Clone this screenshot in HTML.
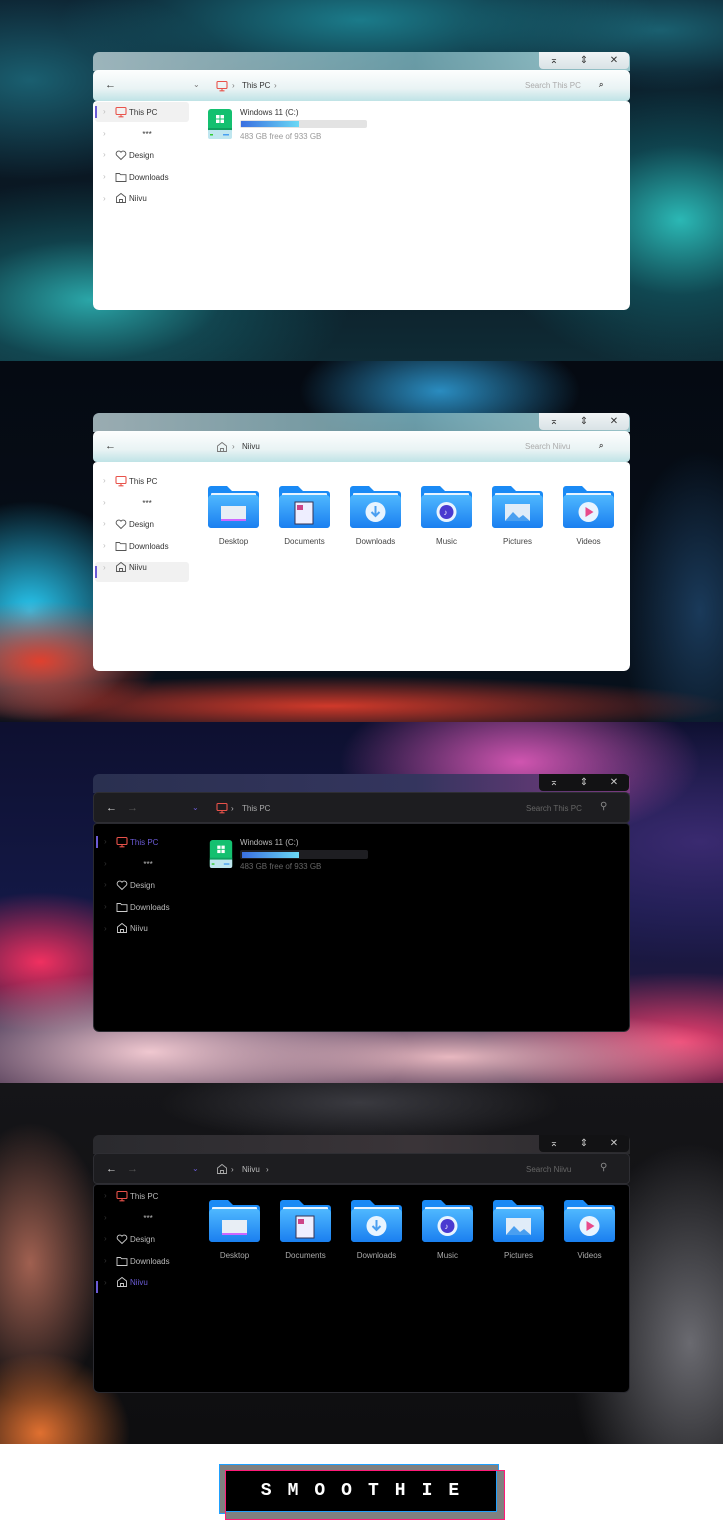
<!DOCTYPE html>
<html><head><meta charset="utf-8">
<style>
*{margin:0;padding:0;box-sizing:border-box}
body{width:723px;height:1536px;background:#fff;font-family:"Segoe UI","Liberation Sans",sans-serif;position:relative;overflow:hidden}
.panel{position:absolute;left:0;width:723px;height:361px;overflow:hidden}
.p1{top:0;background:radial-gradient(ellipse 260px 120px at 90px 300px,#2aa6a8 0%,rgba(20,90,100,.6) 50%,transparent 100%),radial-gradient(ellipse 200px 150px at 680px 220px,#2bb8b5 0%,rgba(20,110,120,.5) 50%,transparent 100%),radial-gradient(ellipse 300px 80px at 360px 20px,#1b7b8a 0%,transparent 100%),radial-gradient(ellipse 200px 100px at 30px 80px,#1a5f70,transparent),radial-gradient(ellipse 200px 60px at 660px 30px,#1a6070,transparent),linear-gradient(180deg,#0b1a28,#0a1722 60%,#0f2b35)}
.p2{top:361px;background:radial-gradient(ellipse 160px 150px at 20px 640px,#2bd5ff,transparent),radial-gradient(ellipse 120px 60px at 40px 300px,#e0402e,transparent),radial-gradient(ellipse 400px 30px at 330px 345px,#d0392a,transparent),radial-gradient(ellipse 120px 110px at 30px 250px,#28c7f0,transparent),radial-gradient(ellipse 140px 60px at 440px 30px,#2a8cc0,transparent),radial-gradient(ellipse 80px 160px at 700px 250px,#1a3a5a,transparent),linear-gradient(180deg,#050a12,#07111c)}
.p3{top:722px;background:radial-gradient(ellipse 180px 80px at 520px 40px,#d055b0,transparent),radial-gradient(ellipse 300px 120px at 700px 120px,#3a2a70,transparent),radial-gradient(ellipse 260px 80px at 150px 330px,#f0c8d0,transparent),radial-gradient(ellipse 300px 50px at 450px 335px,#e8b8c0,transparent),radial-gradient(ellipse 120px 70px at 40px 240px,#f03060,transparent),radial-gradient(ellipse 200px 70px at 680px 320px,#f04070,transparent),linear-gradient(180deg,#0e1030,#131845 50%,#2a1838)}
.p4{top:1083px;background:radial-gradient(ellipse 90px 80px at 40px 350px,#e07030,transparent),radial-gradient(ellipse 80px 140px at 30px 180px,#a06050,transparent),radial-gradient(ellipse 120px 200px at 690px 260px,#6a6a70,transparent),radial-gradient(ellipse 200px 40px at 360px 20px,#3a3a40,transparent),linear-gradient(180deg,#151518,#0e0e10)}
.win{position:absolute;left:93px;top:52px;width:537px;height:258px;border-radius:6px;overflow:hidden}
.title{position:absolute;left:0;top:0;width:537px;height:19px}
.ctrl{position:absolute;right:1px;top:0;width:90px;height:17px;border-radius:0 0 4px 4px;font-size:10px;display:flex;justify-content:space-around;align-items:center}
.addr{position:absolute;left:0;top:18px;width:537px;height:31px;border-radius:5px 5px 4px 4px}
.body{position:absolute;left:0;top:49px;width:537px;height:209px;border-radius:4px 4px 6px 6px}
.sw{position:absolute;left:0;top:0;width:100px;height:120px}
.t{position:absolute;font-size:8px;white-space:nowrap;line-height:10px}
.sw .t{left:36px}
.chev{position:absolute;left:10px;font-size:8px}
.sel{position:absolute;left:2px;width:94px;height:20px;border-radius:3px}
.selbar{position:absolute;left:2px;width:1.5px;height:12px;background:#6b5bd6}
.fold{position:absolute;top:71px;width:51px}
.fold .lbl{position:absolute;top:51px;left:-10px;width:71px;text-align:center;font-size:8px}
.light .title{background:linear-gradient(90deg,rgba(180,200,205,.85),rgba(120,170,180,.85) 60%,rgba(170,215,220,.9))}
.light .ctrl{background:linear-gradient(#f0f4f5,#d9e3e6);color:#333}
.light .addr{background:linear-gradient(180deg,#fdfefe,#e9f3f4 60%,#bfe3e6)}
.light .body{background:#fff}
.light .t{color:#333}
.light .chev{color:#bbb}
.light .sel{background:#f1f1f1}
.dark .title{background:linear-gradient(90deg,#2a3050,#34355e 60%,#7a3a80)}
.dark .ctrl{background:#121214;color:#ccc}
.dark .addr{background:#1d1d20;border:1px solid #2e2e33}
.dark .body{background:#000;border:1px solid #2a2a30}
.dark .t{color:#bbb}
.dark .chev{color:#333}
.p4 .title{background:linear-gradient(90deg,#2a2a2e,#3a3438 60%,#2a2a2d)}
.dark .fold .lbl{color:#aaa}
.light .fold .lbl{color:#444}
</style></head><body>

<svg width="0" height="0" style="position:absolute">
<defs>
<linearGradient id="fg" x1="0" y1="0" x2="0" y2="1"><stop offset="0" stop-color="#4fb8ff"/><stop offset="1" stop-color="#1a7ff0"/></linearGradient>
<symbol id="folder" viewBox="0 0 51 42"><path d="M3 0h16l5 5h24a3 3 0 0 1 3 3v31a3 3 0 0 1-3 3H3a3 3 0 0 1-3-3V3a3 3 0 0 1 3-3z" fill="#1a8af5"/><rect x="3" y="7" width="45" height="3" rx="1" fill="#e8f4ff"/><rect x="0" y="9" width="51" height="33" rx="4" fill="url(#fg)"/></symbol>
<symbol id="pc" viewBox="0 0 12 12"><rect x="1" y="1.5" width="10" height="7" rx="1" fill="none" stroke="#e8524a" stroke-width="1.1"/><path d="M6 8.5v2M3.5 10.8h5" stroke="#e8524a" stroke-width="1.1"/></symbol>
<symbol id="heart" viewBox="0 0 12 12"><path d="M6 10.5 1.6 6.2a2.6 2.6 0 0 1 4.4-3 2.6 2.6 0 0 1 4.4 3z" fill="none" stroke="currentColor" stroke-width="0.9"/></symbol>
<symbol id="fold" viewBox="0 0 12 12"><path d="M1 2.5h3.5l1 1.2H11v6.8H1z" fill="none" stroke="currentColor" stroke-width="0.9"/></symbol>
<symbol id="home" viewBox="0 0 12 12"><path d="M1.5 10.5V5L6 1.5 10.5 5v5.5zM4.5 10.5V7.5h3v3" fill="none" stroke="currentColor" stroke-width="0.9"/></symbol>
<symbol id="drive" viewBox="0 0 24 30"><rect x="0" y="0" width="24" height="30" rx="3" fill="#14c070"/><rect x="0" y="20" width="24" height="10" rx="2" fill="#bfe6ef"/><rect x="0" y="19" width="24" height="2" fill="#10a060"/><rect x="8" y="6" width="3.5" height="3.5" fill="#fff"/><rect x="12.5" y="6" width="3.5" height="3.5" fill="#fff"/><rect x="8" y="10.5" width="3.5" height="3.5" fill="#fff"/><rect x="12.5" y="10.5" width="3.5" height="3.5" fill="#fff"/><rect x="2" y="25" width="3" height="1.5" fill="#3c3"/><rect x="15" y="25" width="6" height="1.5" fill="#4aa0f0"/></symbol>
</defs></svg>

<!-- PANEL 1 -->
<div class="panel p1"><div class="win light">
<div class="title"><div class="ctrl"><span>⌅</span><span>⇕</span><span>✕</span></div></div>
<div class="addr">
<div class="t" style="left:12px;top:10px;font-size:11px">←</div>
<div class="t" style="left:100px;top:10px;color:#777">⌄</div>
<svg style="position:absolute;left:123px;top:10px" width="12" height="12"><use href="#pc"/></svg>
<div class="t" style="left:139px;top:11px;color:#777">›</div>
<div class="t" style="left:149px;top:11px">This PC</div>
<div class="t" style="left:181px;top:11px;color:#777">›</div>
<div class="t" style="left:432px;top:11px;color:#aaa">Search This PC</div>
<div class="t" style="left:506px;top:10px;font-weight:bold;color:#555">⌕</div>
</div>
<div class="body"><div class="sw">
<div class="sel" style="top:1px"></div><div class="selbar" style="top:5px"></div>
<div class="chev" style="top:6px">›</div><svg style="position:absolute;left:22px;top:5px" width="12" height="12"><use href="#pc"/></svg><div class="t" style="top:7px">This PC</div>
<div class="chev" style="top:28px">›</div><div class="t" style="top:29px">&nbsp;&nbsp;&nbsp;&nbsp;&nbsp;&nbsp;***</div>
<div class="chev" style="top:49px">›</div><svg style="position:absolute;left:22px;top:48px;color:#555" width="12" height="12"><use href="#heart"/></svg><div class="t" style="top:50px">Design</div>
<div class="chev" style="top:71px">›</div><svg style="position:absolute;left:22px;top:70px;color:#555" width="12" height="12"><use href="#fold"/></svg><div class="t" style="top:72px">Downloads</div>
<div class="chev" style="top:93px">›</div><svg style="position:absolute;left:22px;top:91px;color:#555" width="12" height="12"><use href="#home"/></svg><div class="t" style="top:93px">Niivu</div>
</div>
<svg style="position:absolute;left:115px;top:8px" width="24" height="30"><use href="#drive"/></svg>
<div class="t" style="left:147px;top:7px">Windows 11 (C:)</div>
<div style="position:absolute;left:147px;top:19px;width:127px;height:8px;background:#e3e3e3;border-radius:2px"><div style="width:58px;height:6px;margin:1px;background:linear-gradient(90deg,#3a6fe0,#6ad8f5)"></div></div>
<div class="t" style="left:147px;top:31px;color:#999">483 GB free of 933 GB</div>
</div></div></div>

<!-- PANEL 2 -->
<div class="panel p2"><div class="win light">
<div class="title"><div class="ctrl"><span>⌅</span><span>⇕</span><span>✕</span></div></div>
<div class="addr">
<div class="t" style="left:12px;top:10px;font-size:11px">←</div>
<svg style="position:absolute;left:123px;top:10px;color:#777" width="12" height="12"><use href="#home"/></svg>
<div class="t" style="left:139px;top:11px;color:#777">›</div>
<div class="t" style="left:149px;top:11px">Niivu</div>
<div class="t" style="left:432px;top:11px;color:#aaa">Search Niivu</div>
<div class="t" style="left:506px;top:10px;font-weight:bold;color:#555">⌕</div>
</div>
<div class="body"><div class="sw" style="top:8px">
<div class="sel" style="top:92px"></div><div class="selbar" style="top:96px"></div>
<div class="chev" style="top:6px">›</div><svg style="position:absolute;left:22px;top:5px" width="12" height="12"><use href="#pc"/></svg><div class="t" style="top:7px">This PC</div>
<div class="chev" style="top:28px">›</div><div class="t" style="top:29px">&nbsp;&nbsp;&nbsp;&nbsp;&nbsp;&nbsp;***</div>
<div class="chev" style="top:49px">›</div><svg style="position:absolute;left:22px;top:48px;color:#555" width="12" height="12"><use href="#heart"/></svg><div class="t" style="top:50px">Design</div>
<div class="chev" style="top:71px">›</div><svg style="position:absolute;left:22px;top:70px;color:#555" width="12" height="12"><use href="#fold"/></svg><div class="t" style="top:72px">Downloads</div>
<div class="chev" style="top:93px">›</div><svg style="position:absolute;left:22px;top:91px;color:#555" width="12" height="12"><use href="#home"/></svg><div class="t" style="top:93px">Niivu</div>
</div>
<div class="fold" style="left:115px;top:24px"><svg width="51" height="42"><use href="#folder"/><rect x="13" y="20" width="25" height="15" fill="#e8eef5"/><rect x="13" y="33" width="25" height="2" fill="#c6f"/></svg><div class="lbl">Desktop</div></div>
<div class="fold" style="left:186px;top:24px"><svg width="51" height="42"><use href="#folder"/><rect x="16" y="16" width="18" height="22" fill="#eef" stroke="#335" stroke-width="1"/><rect x="18" y="19" width="6" height="5" fill="#c48"/></svg><div class="lbl">Documents</div></div>
<div class="fold" style="left:257px;top:24px"><svg width="51" height="42"><use href="#folder"/><circle cx="25.5" cy="26" r="10" fill="#e8f4ff"/><path d="M25.5 20v10M21.5 26l4 4 4-4" stroke="#4a9ff0" stroke-width="2" fill="none"/></svg><div class="lbl">Downloads</div></div>
<div class="fold" style="left:328px;top:24px"><svg width="51" height="42"><use href="#folder"/><circle cx="25.5" cy="26" r="10" fill="#e8f4ff"/><circle cx="25.5" cy="26" r="7" fill="#4a3ad0"/><text x="22.5" y="29" font-size="8" fill="#fff">♪</text></svg><div class="lbl">Music</div></div>
<div class="fold" style="left:399px;top:24px"><svg width="51" height="42"><use href="#folder"/><rect x="13" y="18" width="25" height="17" fill="#e0ecf8"/><path d="M13 35l8-9 6 6 4-3 7 6z" fill="#4a9ff0"/></svg><div class="lbl">Pictures</div></div>
<div class="fold" style="left:470px;top:24px"><svg width="51" height="42"><use href="#folder"/><circle cx="25.5" cy="26" r="10" fill="#e8f4ff"/><path d="M22.5 21v10l8-5z" fill="#e84a8a"/></svg><div class="lbl">Videos</div></div>
</div></div></div>

<!-- PANEL 3 -->
<div class="panel p3"><div class="win dark">
<div class="title"><div class="ctrl"><span>⌅</span><span>⇕</span><span>✕</span></div></div>
<div class="addr">
<div class="t" style="left:12px;top:10px;font-size:11px;color:#ddd">←</div>
<div class="t" style="left:33px;top:10px;font-size:11px;color:#555">→</div>
<div class="t" style="left:98px;top:10px;color:#6b5bd6">⌄</div>
<svg style="position:absolute;left:122px;top:9px" width="12" height="12"><use href="#pc"/></svg>
<div class="t" style="left:137px;top:11px;color:#bbb">›</div>
<div class="t" style="left:148px;top:11px;color:#aaa">This PC</div>
<div class="t" style="left:432px;top:11px;color:#666">Search This PC</div>
<div class="t" style="left:506px;top:9px;color:#888;font-size:10px">⚲</div>
</div>
<div class="body"><div class="sw" style="top:7px">
<div class="selbar" style="top:5px"></div>
<div class="chev" style="top:6px">›</div><svg style="position:absolute;left:22px;top:5px" width="12" height="12"><use href="#pc"/></svg><div class="t" style="top:7px;color:#6b5bd6">This PC</div>
<div class="chev" style="top:28px">›</div><div class="t" style="top:29px">&nbsp;&nbsp;&nbsp;&nbsp;&nbsp;&nbsp;***</div>
<div class="chev" style="top:49px">›</div><svg style="position:absolute;left:22px;top:48px;color:#ccc" width="12" height="12"><use href="#heart"/></svg><div class="t" style="top:50px">Design</div>
<div class="chev" style="top:71px">›</div><svg style="position:absolute;left:22px;top:70px;color:#ccc" width="12" height="12"><use href="#fold"/></svg><div class="t" style="top:72px">Downloads</div>
<div class="chev" style="top:93px">›</div><svg style="position:absolute;left:22px;top:91px;color:#ccc" width="12" height="12"><use href="#home"/></svg><div class="t" style="top:93px">Niivu</div>
</div>
<svg style="position:absolute;left:115px;top:16px" width="24" height="28"><use href="#drive"/></svg>
<div class="t" style="left:146px;top:14px">Windows 11 (C:)</div>
<div style="position:absolute;left:146px;top:26px;width:128px;height:9px;background:#1e1e22;border-radius:2px"><div style="width:57px;height:6px;margin:1.5px;background:linear-gradient(90deg,#3a6fe0,#6ad8f5)"></div></div>
<div class="t" style="left:146px;top:38px;color:#666">483 GB free of 933 GB</div>
</div></div></div>

<!-- PANEL 4 -->
<div class="panel p4"><div class="win dark">
<div class="title"><div class="ctrl"><span>⌅</span><span>⇕</span><span>✕</span></div></div>
<div class="addr">
<div class="t" style="left:12px;top:10px;font-size:11px;color:#ddd">←</div>
<div class="t" style="left:33px;top:10px;font-size:11px;color:#555">→</div>
<div class="t" style="left:98px;top:10px;color:#6b5bd6">⌄</div>
<svg style="position:absolute;left:122px;top:9px;color:#aaa" width="12" height="12"><use href="#home"/></svg>
<div class="t" style="left:137px;top:11px;color:#bbb">›</div>
<div class="t" style="left:148px;top:11px;color:#bbb">Niivu</div>
<div class="t" style="left:172px;top:11px;color:#bbb">›</div>
<div class="t" style="left:432px;top:11px;color:#666">Search Niivu</div>
<div class="t" style="left:506px;top:9px;color:#888;font-size:10px">⚲</div>
</div>
<div class="body"><div class="sw">
<div class="selbar" style="top:96px"></div>
<div class="chev" style="top:6px">›</div><svg style="position:absolute;left:22px;top:5px" width="12" height="12"><use href="#pc"/></svg><div class="t" style="top:7px">This PC</div>
<div class="chev" style="top:28px">›</div><div class="t" style="top:29px">&nbsp;&nbsp;&nbsp;&nbsp;&nbsp;&nbsp;***</div>
<div class="chev" style="top:49px">›</div><svg style="position:absolute;left:22px;top:48px;color:#ccc" width="12" height="12"><use href="#heart"/></svg><div class="t" style="top:50px">Design</div>
<div class="chev" style="top:71px">›</div><svg style="position:absolute;left:22px;top:70px;color:#ccc" width="12" height="12"><use href="#fold"/></svg><div class="t" style="top:72px">Downloads</div>
<div class="chev" style="top:93px">›</div><svg style="position:absolute;left:22px;top:91px;color:#ccc" width="12" height="12"><use href="#home"/></svg><div class="t" style="top:93px;color:#6b5bd6">Niivu</div>
</div>
<div class="fold" style="left:115px;top:15px"><svg width="51" height="42"><use href="#folder"/><rect x="13" y="20" width="25" height="15" fill="#e8eef5"/><rect x="13" y="33" width="25" height="2" fill="#c6f"/></svg><div class="lbl">Desktop</div></div>
<div class="fold" style="left:186px;top:15px"><svg width="51" height="42"><use href="#folder"/><rect x="16" y="16" width="18" height="22" fill="#eef" stroke="#335" stroke-width="1"/><rect x="18" y="19" width="6" height="5" fill="#c48"/></svg><div class="lbl">Documents</div></div>
<div class="fold" style="left:257px;top:15px"><svg width="51" height="42"><use href="#folder"/><circle cx="25.5" cy="26" r="10" fill="#e8f4ff"/><path d="M25.5 20v10M21.5 26l4 4 4-4" stroke="#4a9ff0" stroke-width="2" fill="none"/></svg><div class="lbl">Downloads</div></div>
<div class="fold" style="left:328px;top:15px"><svg width="51" height="42"><use href="#folder"/><circle cx="25.5" cy="26" r="10" fill="#e8f4ff"/><circle cx="25.5" cy="26" r="7" fill="#4a3ad0"/><text x="22.5" y="29" font-size="8" fill="#fff">♪</text></svg><div class="lbl">Music</div></div>
<div class="fold" style="left:399px;top:15px"><svg width="51" height="42"><use href="#folder"/><rect x="13" y="18" width="25" height="17" fill="#e0ecf8"/><path d="M13 35l8-9 6 6 4-3 7 6z" fill="#4a9ff0"/></svg><div class="lbl">Pictures</div></div>
<div class="fold" style="left:470px;top:15px"><svg width="51" height="42"><use href="#folder"/><circle cx="25.5" cy="26" r="10" fill="#e8f4ff"/><path d="M22.5 21v10l8-5z" fill="#e84a8a"/></svg><div class="lbl">Videos</div></div>
</div></div></div>

<!-- SMOOTHIE badge -->
<div style="position:absolute;left:219px;top:1464px;width:280px;height:50px;background:#808080;border:1.5px solid #1ea0ff"></div>
<div style="position:absolute;left:225px;top:1470px;width:280px;height:50px;background:#808080;border:1.5px solid #ff1a78"></div>
<div style="position:absolute;left:226px;top:1471px;width:271px;height:41px;background:#000;border-right:1.5px solid #1ea0ff;border-bottom:1.5px solid #1ea0ff;color:#fff;font-family:'Liberation Mono',monospace;font-weight:bold;font-size:18px;letter-spacing:16px;text-align:center;line-height:40px;padding-left:14px">SMOOTHIE</div>
</body></html>
